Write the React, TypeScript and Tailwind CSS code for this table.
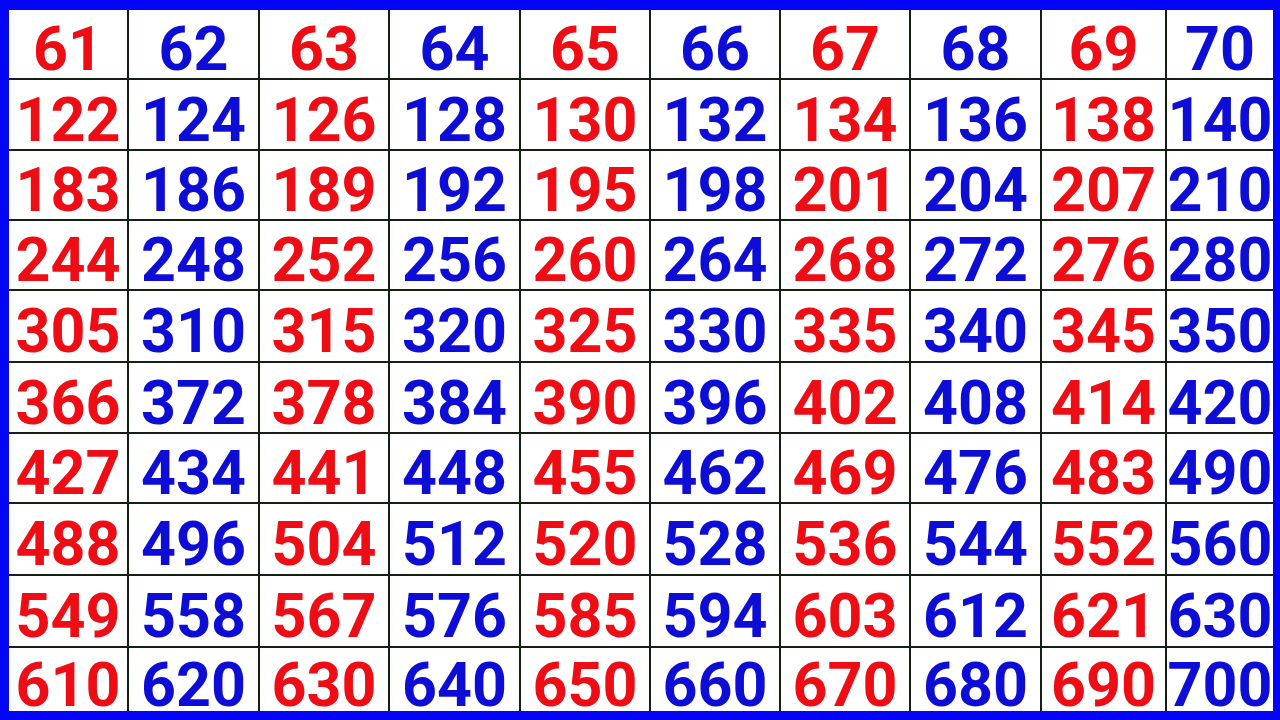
import React from "react";

// multiples of 61..70, rows 1..10
const bases = [61, 62, 63, 64, 65, 66, 67, 68, 69, 70];
const rows = [1, 2, 3, 4, 5, 6, 7, 8, 9, 10];

const App: React.FC = () => {
    return (
        <div className="w-[1280px] h-[720px] bg-[#0505f5] pt-[10px] pl-[9px] pr-[7px] pb-[9px] overflow-hidden">
            <div
                className="grid gap-[2px] bg-[#142014] grid-cols-[118px_129px_128px_129px_128px_128px_128px_129px_123px_106px] grid-rows-[68px_69px_68px_68px_70px_69px_68px_70px_70px_63px]"
                style={{ fontFamily: "Roboto, 'Liberation Sans', sans-serif" }}
            >
                {rows.map((r) =>
                    bases.map((b, i) => (
                        <div
                            key={`${r}-${b}`}
                            className={`bg-white relative min-h-0 overflow-visible ${i % 2 === 0 ? "text-[#ee0d14]" : "text-[#0d0dd6]"}`}
                        >
                            <span className="absolute left-1/2 top-1/2 -translate-x-1/2 -translate-y-1/2 mt-[5px] whitespace-nowrap text-[61px] font-bold leading-none z-10">
                                {b * r}
                            </span>
                        </div>
                    ))
                )}
            </div>
        </div>
    );
};

export default App;
